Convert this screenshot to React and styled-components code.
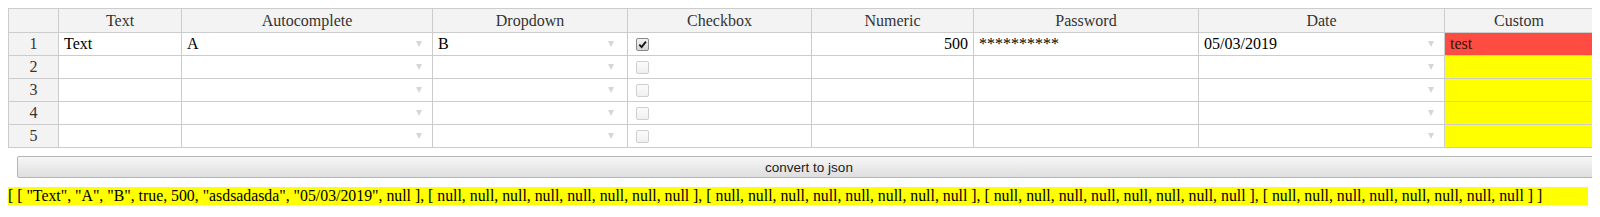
import React from 'react';
import styled, { createGlobalStyle } from 'styled-components';

const GlobalStyle = createGlobalStyle`
  body {
    margin: 8px;
    background: #ffffff;
    font-family: "Liberation Serif", "Times New Roman", serif;
    font-size: 16px;
    color: #000;
  }
`;

const columns = [
  { title: 'Text', width: 123, type: 'text' },
  { title: 'Autocomplete', width: 251, type: 'select' },
  { title: 'Dropdown', width: 195, type: 'select' },
  { title: 'Checkbox', width: 184, type: 'checkbox' },
  { title: 'Numeric', width: 162, type: 'numeric' },
  { title: 'Password', width: 225, type: 'text' },
  { title: 'Date', width: 246, type: 'select' },
  { title: 'Custom', width: 149, type: 'custom' },
];

const data = [
  ['Text', 'A', 'B', true, 500, 'asdsadasda', '05/03/2019', null],
  [null, null, null, null, null, null, null, null],
  [null, null, null, null, null, null, null, null],
  [null, null, null, null, null, null, null, null],
  [null, null, null, null, null, null, null, null],
];

const Sheet = styled.table`
  table-layout: fixed;
  width: 1585px;
  border-collapse: collapse;
  font-size: 16px;
`;

const HeadCell = styled.th`
  height: 23px;
  padding: 0;
  border: 1px solid #cccccc;
  background: #f3f3f3;
  color: #333;
  font-weight: normal;
  text-align: center;
  white-space: nowrap;
`;

const RowNum = styled.td`
  height: 22px;
  padding: 0;
  border: 1px solid #cccccc;
  background: #f3f3f3;
  color: #333;
  text-align: center;
`;

const Cell = styled.td`
  height: 22px;
  padding: 0 5px;
  border: 1px solid #cccccc;
  background: ${p => p.bg || '#ffffff'};
  color: ${p => p.ink || '#000'};
  text-align: ${p => (p.right ? 'right' : 'left')};
  white-space: nowrap;
  overflow: hidden;
  line-height: 22px;
`;

const SelectBox = styled.div`
  display: flex;
  align-items: center;
  justify-content: space-between;
`;

const Arrow = styled.span`
  width: 0;
  height: 0;
  margin-right: ${p => p.gap}px;
  border-left: 3px solid transparent;
  border-right: 3px solid transparent;
  border-top: 6px solid #d6d6d6;
`;

const Check = styled.span`
  display: inline-flex;
  align-items: center;
  justify-content: center;
  width: 11px;
  height: 11px;
  margin: 5px 0 0 3px;
  border: 1px solid ${p => (p.on ? '#8a8a8a' : '#cfcfcf')};
  border-radius: 2px;
  background: ${p => (p.on ? 'linear-gradient(#f4f4f4, #d4d4d4)' : 'linear-gradient(#fbfbfb, #f0f0f0)')};
  vertical-align: top;
`;

const ConvertButton = styled.button`
  display: block;
  width: 1584px;
  height: 22px;
  margin: 8px 0 0 9px;
  padding: 0;
  border: 1px solid #b5b5b5;
  border-radius: 2px;
  background: linear-gradient(#f7f7f7, #dedede);
  font-family: "Liberation Sans", Arial, sans-serif;
  font-size: 13.5px;
  color: #222;
`;

const Output = styled.div`
  margin-top: 9px;
  width: 1580px;
  background: #ffff00;
  font-size: 15.8px;
  line-height: 18px;
  white-space: nowrap;
`;

const renderCell = (col, value, r) => {
  if (col.type === 'checkbox') {
    return (
      <Cell key={col.title}>
        <Check on={value ? 1 : 0}>
          {value && (
            <svg width="9" height="9" viewBox="0 0 10 10">
              <path d="M1.5 5.2 L4 7.8 L8.8 1.8" fill="none" stroke="#111" strokeWidth="2" />
            </svg>
          )}
        </Check>
      </Cell>
    );
  }
  if (col.type === 'select') {
    const gap = col.title === 'Dropdown' ? 8 : 5;
    return (
      <Cell key={col.title}>
        <SelectBox>
          <span>{value}</span>
          <Arrow gap={gap} />
        </SelectBox>
      </Cell>
    );
  }
  if (col.type === 'numeric') {
    return <Cell key={col.title} right>{value}</Cell>;
  }
  if (col.type === 'custom') {
    return (
      <Cell key={col.title} bg={r === 0 ? '#ff4c42' : '#ffff00'} ink="#3a1210">
        {r === 0 ? 'test' : ''}
      </Cell>
    );
  }
  if (col.title === 'Password' && value) {
    return <Cell key={col.title}>{'*'.repeat(10)}</Cell>;
  }
  return <Cell key={col.title}>{value}</Cell>;
};

export default function App() {
  const json = '[ ' + data.map(row => '[ ' + row.map(v => JSON.stringify(v)).join(', ') + ' ]').join(', ') + ' ]';

  return (
    <>
      <GlobalStyle />
      <Sheet>
        <colgroup>
          <col style={{ width: 50 }} />
          {columns.map(c => (
            <col key={c.title} style={{ width: c.width }} />
          ))}
        </colgroup>
        <thead>
          <tr>
            <HeadCell />
            {columns.map(c => (
              <HeadCell key={c.title}>{c.title}</HeadCell>
            ))}
          </tr>
        </thead>
        <tbody>
          {data.map((row, r) => (
            <tr key={r}>
              <RowNum>{r + 1}</RowNum>
              {columns.map((c, i) => renderCell(c, row[i], r))}
            </tr>
          ))}
        </tbody>
      </Sheet>
      <ConvertButton>convert to json</ConvertButton>
      <Output>{json}</Output>
    </>
  );
}
